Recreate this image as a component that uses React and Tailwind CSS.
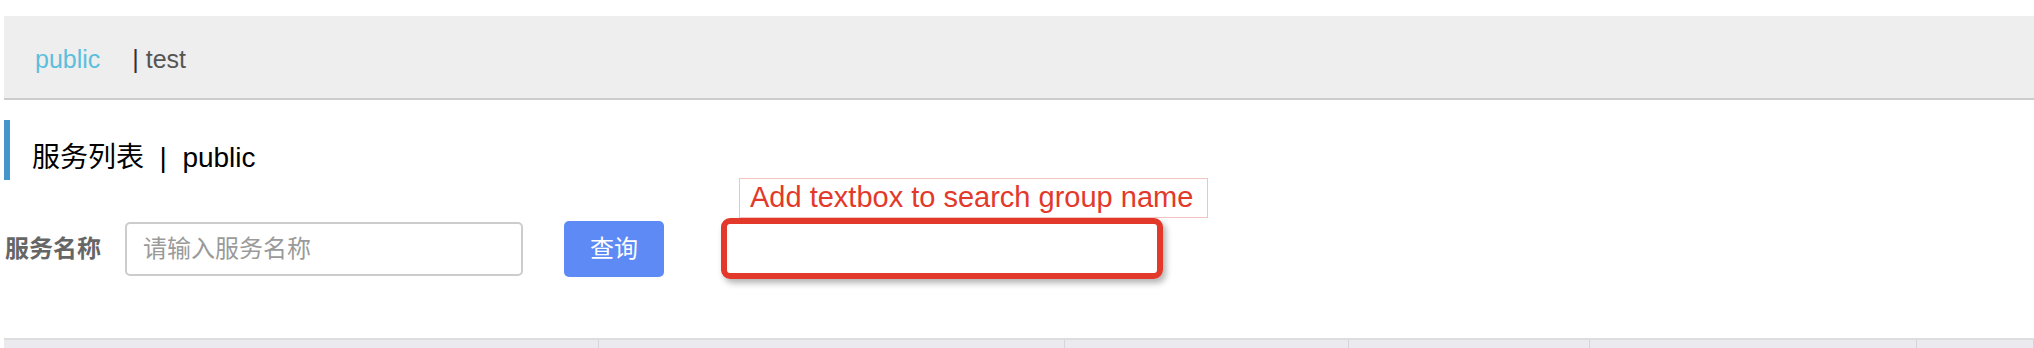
import React from 'react';

const font = { fontFamily: '"Liberation Sans", "Noto Sans CJK SC", sans-serif' };

const columns = [595, 466, 284, 241, 327, 117];

const App = () => {
  return (
    <div className="w-full h-[348px] overflow-hidden bg-white pl-[4px] pt-[16px]" style={font}>
      {/* Top nav */}
      <div className="h-[84px] bg-[#eeeeee] border-b-2 border-[#cccccc] flex items-center pl-[31px] pt-[6px] text-[25px]">
        <span className="text-[#5bbfdc]">public</span>
        <span className="ml-[32px] text-[#555555]">
          <span className="text-[#333333]">|</span> test
        </span>
      </div>

      {/* Heading */}
      <div className="mt-[20px] h-[60px] border-l-[6px] border-[#4597c9] flex items-center pl-[22px] pt-[15px] text-[28px] text-black">
        服务列表 &nbsp;|&nbsp; public
      </div>

      {/* Search row */}
      <div className="mt-[38px] flex items-center h-[61px]">
        <label className="ml-[1px] shrink-0 whitespace-nowrap text-[24px] font-bold text-[#666666] w-[96px]">服务名称</label>
        <input
          className="ml-[24px] shrink-0 w-[398px] h-[54px] border-2 border-[#cccccc] rounded-[5px] px-[16px] text-[24px] placeholder:text-[#9a9a9a] outline-none"
          placeholder="请输入服务名称"
        />
        <button className="ml-[41px] shrink-0 w-[100px] h-[56px] rounded-[5px] bg-[#5d8af5] text-white text-[24px]">
          查询
        </button>
        <div className="relative ml-[57px] shrink-0 w-[442px] h-[61px] rounded-[9px] border-[6px] border-[#e2392b] shadow-[3px_4px_6px_rgba(0,0,0,0.3)]">
          <div className="absolute left-[12px] top-[-46px] w-[469px] h-[40px] border border-[#f2c3bf] bg-white flex items-center pl-[10px] text-[29px] text-[#e2392b] whitespace-nowrap">
            Add textbox to search group name
          </div>
        </div>
      </div>

      {/* Table header */}
      <div className="mt-[59px] border-t-2 border-[#dddddd] h-[40px] bg-[#ebebef] flex">
        {columns.map((w, i) => (
          <div key={i} style={{ width: w }} className="h-full border-r border-[#d6d6da]" />
        ))}
      </div>
    </div>
  );
};

export default App;
